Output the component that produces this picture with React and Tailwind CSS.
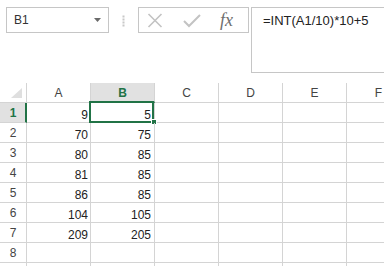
import React from "react";

const rows = [
  [9, 5],
  [70, 75],
  [80, 85],
  [81, 85],
  [86, 85],
  [104, 105],
  [209, 205],
  [null, null],
  [null, null],
];
const cols = ["A", "B", "C", "D", "E", "F"];

export default function App() {
  return (
    <div className="w-[384px] h-[266px] overflow-hidden bg-white font-['Liberation_Sans',Arial,sans-serif] text-[#222]">
      {/* top bar */}
      <div className="h-[83px] flex items-start pt-[7px] pl-[6px] w-[500px]">
        <div className="shrink-0 w-[103px] h-[26px] border border-[#c6c6c6] flex items-center justify-between pl-[7px] pr-[7px] text-[12px] text-[#333]">
          <span>B1</span>
          <svg width="7" height="4" viewBox="0 0 7 4">
            <path d="M0 0 L7 0 L3.5 4 Z" fill="#6a6a6a" />
          </svg>
        </div>
        <div className="shrink-0 ml-[13px] mt-[8px] flex">
          <svg width="3" height="12" viewBox="0 0 3 12">
            <rect x="0.5" y="0.5" width="2" height="2" fill="#c8c8c8" />
            <rect x="0.5" y="3.5" width="2" height="2" fill="#c8c8c8" />
            <rect x="0.5" y="6.5" width="2" height="2" fill="#c8c8c8" />
            <rect x="0.5" y="9.5" width="2" height="2" fill="#c8c8c8" />
          </svg>
        </div>
        <div className="shrink-0 ml-[13px] w-[111px] h-[26px] border border-[#c6c6c6] flex items-center">
          <svg className="ml-[8px] shrink-0" width="16" height="15" viewBox="0 0 16 15">
            <path d="M1.5 1 L14.5 14 M14.5 1 L1.5 14" stroke="#c3c3c3" strokeWidth="1.6" fill="none" />
          </svg>
          <svg className="ml-[20px] shrink-0" width="18" height="15" viewBox="0 0 18 15">
            <path d="M1 8 L6 13 L17 2" stroke="#c3c3c3" strokeWidth="2" fill="none" />
          </svg>
          <span className="ml-[19px] font-['Liberation_Serif',serif] italic text-[18px] leading-none text-[#6e6e6e]">
            fx
          </span>
        </div>
        <div className="shrink-0 ml-[2px] w-[160px] h-[66px] border border-[#c6c6c6] pl-[11px] pt-[5px] text-[13px] leading-[16px] text-[#222]">
          =INT(A1/10)*10+5
        </div>
      </div>

      {/* grid */}
      <div className="grid grid-cols-[27px_64px_64px_64px_64px_64px_64px] w-[411px]">
        {/* header row */}
        <div className="h-[20px] border-r border-b border-[#d4d4d4] flex items-end justify-end pr-[4px] pb-[4px]">
          <svg width="11" height="10" viewBox="0 0 11 10">
            <path d="M11 0 L11 10 L0 10 Z" fill="#dfdfdf" />
          </svg>
        </div>
        {cols.map((c) => (
          <div
            key={c}
            className={
              c === "B"
                ? "h-[20px] border-r border-b border-r-[#d4d4d4] border-b-[#217346] border-b-2 bg-[#e1e1e1] flex items-center justify-center text-[12px] font-bold text-[#217346] pt-[1px]"
                : "h-[20px] border-r border-b border-[#d4d4d4] flex items-center justify-center text-[12px] text-[#444]"
            }
          >
            {c}
          </div>
        ))}
        {rows.map((r, i) => (
          <React.Fragment key={i}>
            <div
              className={
                i === 0
                  ? "h-[20px] border-b border-[#d4d4d4] border-r-2 border-r-[#217346] bg-[#e1e1e1] flex items-center justify-center text-[12px] font-bold text-[#217346] pl-[1px]"
                  : "h-[20px] border-r border-b border-[#d4d4d4] flex items-center justify-center text-[12px] text-[#444]"
              }
            >
              {i < 8 ? i + 1 : ""}
            </div>
            <div className="h-[20px] border-r border-b border-[#d4d4d4] flex items-end justify-end pr-[2px] text-[12px] leading-[14px]">
              {r[0]}
            </div>
            <div className="relative h-[20px] border-r border-b border-[#d4d4d4] flex items-end justify-end pr-[3px] text-[12px] leading-[14px]">
              {r[1]}
              {i === 0 && (
                <>
                  <div className="absolute left-[-2px] top-[-2px] w-[65px] h-[22px] border-2 border-[#217346]" />
                  <div className="absolute left-[60px] top-[16px] w-[6px] h-[6px] bg-[#217346] border border-white" />
                </>
              )}
            </div>
            <div className="h-[20px] border-r border-b border-[#d4d4d4]" />
            <div className="h-[20px] border-r border-b border-[#d4d4d4]" />
            <div className="h-[20px] border-r border-b border-[#d4d4d4]" />
            <div className="h-[20px] border-r border-b border-[#d4d4d4]" />
          </React.Fragment>
        ))}
      </div>
    </div>
  );
}
